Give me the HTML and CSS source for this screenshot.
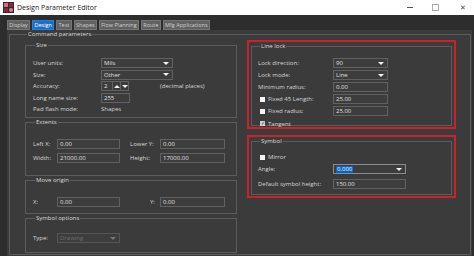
FILE: index.html
```html
<!DOCTYPE html>
<html lang="en">
<head>
    <meta charset="UTF-8">
    <title>Design Parameter Editor</title>
    <link rel="stylesheet" href="styles.css">
</head>
<body>
    <div class="titlebar">
        <svg class="app-icon" width="11" height="11" viewBox="0 0 11 11">
            <rect x="0" y="0" width="11" height="11" fill="#3a2a30"/>
            <rect x="1" y="1" width="4" height="4" fill="#d86a86"/>
            <rect x="6" y="1" width="4" height="4" fill="#8a2440"/>
            <rect x="1" y="6" width="4" height="4" fill="#8a2440"/>
            <circle cx="8" cy="8" r="2" fill="#e07a94"/>
        </svg>
        <span class="title">Design Parameter Editor</span>
        <div class="controls">
            <span class="ctl-min"></span>
            <span class="ctl-max"></span>
            <span class="ctl-close">&#x2715;</span>
        </div>
    </div>

    <div class="window">
        <div class="tabs">
            <span class="tab">Display</span>
            <span class="tab active">Design</span>
            <span class="tab">Text</span>
            <span class="tab">Shapes</span>
            <span class="tab">Flow Planning</span>
            <span class="tab">Route</span>
            <span class="tab">Mfg Applications</span>
        </div>

        <div class="panel">
            <fieldset class="group command">
                <legend>Command parameters</legend>
                <div class="cols">
                    <div class="col-left">
                        <fieldset class="group size">
                            <legend>Size</legend>
                            <div class="form-rows">
                                <span class="lbl">User units:</span>
                                <div class="select w72"><span>Mils</span><i class="arrow"></i></div>
                                <span class="lbl">Size:</span>
                                <div class="select w72"><span>Other</span><i class="arrow"></i></div>
                                <span class="lbl">Accuracy:</span>
                                <div class="spin-row">
                                    <div class="input w12">2</div>
                                    <span class="spin-btn"><i class="arrow up"></i></span>
                                    <span class="spin-btn"><i class="arrow"></i></span>
                                    <span class="note">(decimal places)</span>
                                </div>
                                <span class="lbl">Long name size:</span>
                                <div class="input w29">255</div>
                                <span class="lbl">Pad flash mode:</span>
                                <span class="value">Shapes</span>
                            </div>
                        </fieldset>

                        <fieldset class="group extents">
                            <legend>Extents</legend>
                            <div class="xy-grid">
                                <span class="lbl">Left X:</span>
                                <div class="input">0.00</div>
                                <span class="lbl">Lower Y:</span>
                                <div class="input">0.00</div>
                                <span class="lbl">Width:</span>
                                <div class="input">21000.00</div>
                                <span class="lbl">Height:</span>
                                <div class="input">17000.00</div>
                            </div>
                        </fieldset>

                        <fieldset class="group origin">
                            <legend>Move origin</legend>
                            <div class="xy-grid">
                                <span class="lbl">X:</span>
                                <div class="input">0.00</div>
                                <span class="lbl lbl-y">Y:</span>
                                <div class="input">0.00</div>
                            </div>
                        </fieldset>

                        <fieldset class="group symopts">
                            <legend>Symbol options</legend>
                            <div class="xy-grid">
                                <span class="lbl">Type:</span>
                                <div class="select disabled"><span>Drawing</span><i class="arrow"></i></div>
                            </div>
                        </fieldset>
                    </div>

                    <div class="col-right">
                        <div class="highlight linelock-box">
                            <fieldset class="group linelock">
                                <legend>Line lock</legend>
                                <div class="lock-rows">
                                    <span class="lbl">Lock direction:</span>
                                    <div class="select w55"><span>90</span><i class="arrow"></i></div>
                                    <span class="lbl">Lock mode:</span>
                                    <div class="select w55"><span>Line</span><i class="arrow"></i></div>
                                    <span class="lbl">Minimum radius:</span>
                                    <div class="input w55">0.00</div>
                                    <span class="lbl check"><i class="box"></i>Fixed 45 Length:</span>
                                    <div class="input w55">25.00</div>
                                    <span class="lbl check"><i class="box"></i>Fixed radius:</span>
                                    <div class="input w55">25.00</div>
                                    <span class="lbl check tangent"><i class="box checked">&#x2713;</i>Tangent</span>
                                </div>
                            </fieldset>
                        </div>

                        <div class="highlight symbol-box">
                            <fieldset class="group symbol">
                                <legend>Symbol</legend>
                                <span class="lbl check mirror"><i class="box"></i>Mirror</span>
                                <div class="lock-rows sym-rows">
                                    <span class="lbl">Angle:</span>
                                    <div class="select w73 focused"><span class="selected-text">0.000</span><i class="arrow"></i></div>
                                    <span class="lbl">Default symbol height:</span>
                                    <div class="input w73">150.00</div>
                                </div>
                            </fieldset>
                        </div>
                    </div>
                </div>
            </fieldset>
        </div>
    </div>
</body>
</html>
```

FILE: styles.css
```css
body { margin: 0; width: 474px; height: 256px; overflow: hidden; background-color: #2d2d2d; font-family: 'Open Sans', 'Noto Sans', sans-serif; color: #d6d6d6; font-size: 6px; }

/* title bar */
.titlebar { height: 15px; background-color: #fff; display: flex; align-items: center; padding-left: 3px; }
.app-icon { display: block; margin-right: 3px; }
.title { font-size: 7px; color: #202020; }
.controls { margin-left: auto; display: flex; align-items: center; height: 15px; }
.ctl-min { width: 6px; height: 1px; background-color: #555; margin-right: 19px; }
.ctl-max { width: 5px; height: 5px; border: 1px solid #aaa; margin-right: 21px; }
.ctl-close { font-size: 7px; color: #444; margin-right: 8px; line-height: 15px; }

/* tabs */
.tabs { display: flex; gap: 2px; padding: 5px 0 0 7px; height: 10px; }
.tab {
    background-color: #616161;
    border: 1px solid #757575;
    color: #d0d0d0;
    height: 10px;
    box-sizing: border-box;
    line-height: 8px;
    padding: 0 1.3px;
    font-size: 5.5px;
}
.tab.active { background-color: #1c6fc6; border-color: #2a7fd6; color: #fff; }

.panel { background-color: #3b3b3b; margin: 0 2px 0 7px; height: 226px; padding-left: 2px; }

/* group boxes */
.group { margin: 0; border: 1px solid #5c5c5c; box-sizing: border-box; min-width: 0; }
.group legend { font-size: 6px; line-height: 8px; padding: 0 1px; margin-left: 2px; color: #dcdcdc; }

.command { width: 462px; height: 225px; padding: 3px 0 0 15px; }
.cols { display: flex; gap: 10px; }
.col-left { width: 212px; display: flex; flex-direction: column; }
.col-right { width: 209px; margin-top: -1px; display: flex; flex-direction: column; gap: 6px; }

.size { height: 77px; padding: 9px 0 0 7px; }
.extents { height: 58px; padding: 13px 0 0 7px; }
.origin { height: 38px; padding: 13px 0 0 7px; }
.symopts { height: 39px; padding: 11px 0 0 7px; }

.lbl { line-height: 10px; white-space: nowrap; }
.value { line-height: 10px; }

.form-rows { display: grid; grid-template-columns: 68px 1fr; row-gap: 1.5px; grid-auto-rows: 10px; }
.xy-grid { display: grid; grid-template-columns: 24px 63px 10px 30px 65px; row-gap: 4px; grid-auto-rows: 10px; }
.xy-grid .lbl:nth-of-type(2n) { grid-column: 4; }
.xy-grid .lbl-y { padding-left: 20px; }

/* controls */
.input, .select {
    border: 1px solid #616161;
    background-color: #3d3d3d;
    box-sizing: border-box;
    height: 10px;
    line-height: 8px;
    padding-left: 2px;
    color: #e0e0e0;
    white-space: nowrap;
    overflow: hidden;
}
.select { display: flex; justify-content: space-between; align-items: center; padding-right: 3px; }
.select.disabled { color: #6e6e6e; border-color: #555; }
.select.disabled .arrow { border-top-color: #777; }
.select.focused { border-color: #8c8c8c; }
.selected-text { background-color: #0a64c8; color: #fff; padding: 0 1px; line-height: 7px; }
.arrow { display: inline-block; width: 0; height: 0; border-left: 3px solid transparent; border-right: 3px solid transparent; border-top: 3px solid #f2f2f2; }
.arrow.up { border-top: none; border-bottom: 3px solid #f2f2f2; }

.w72 { width: 72px; }
.w55 { width: 55px; }
.w73 { width: 73px; }
.w12 { width: 12px; }
.w29 { width: 29px; }

.spin-row { display: flex; align-items: center; }
.spin-btn { width: 9px; height: 10px; border: 1px solid #616161; box-sizing: border-box; display: flex; align-items: center; justify-content: center; margin-left: -1px; }
.note { margin-left: 31px; line-height: 10px; }

/* line lock + symbol */
.highlight { border: 2px solid #c9212e; padding: 0 2px 1px 2px; box-sizing: border-box; }
.linelock-box { height: 89px; }
.symbol-box { height: 63px; }
.linelock { height: 84px; padding: 8px 0 0 6px; }
.symbol { height: 58px; padding: 8px 0 0 6px; }

.lock-rows { display: grid; grid-template-columns: 75px 1fr; row-gap: 2px; grid-auto-rows: 10px; }
.check { display: flex; align-items: center; padding-left: 2px; }
.box { display: inline-block; width: 5px; height: 5px; background-color: #f4f4f4; margin-right: 3px; font-style: normal; }
.box.checked { background-color: #cfcfcf; color: #333; font-size: 5px; line-height: 5px; text-align: center; }
.tangent { grid-column: 1 / 3; margin-top: 1px; }
.mirror { height: 8px; line-height: 8px; margin-bottom: 3px; }
.sym-rows { row-gap: 5px; }
```
